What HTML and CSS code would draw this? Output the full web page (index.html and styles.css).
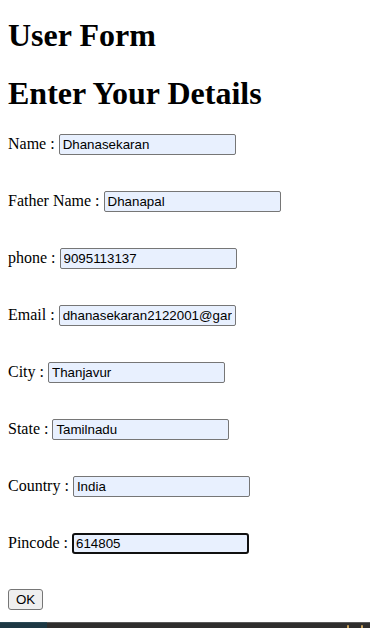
FILE: index.html
```html
<!DOCTYPE html>
<html lang="en">
<head>
<meta charset="utf-8">
<title>User Form</title>
<link rel="stylesheet" href="styles.css">
</head>
<body>
<h1 class="title">User Form</h1>
<h1 class="subtitle">Enter Your Details</h1>
<form class="form">
  <label class="row"><span class="label">Name :</span><input class="field" type="text" value="Dhanasekaran"></label>
  <label class="row"><span class="label">Father Name :</span><input class="field" type="text" value="Dhanapal"></label>
  <label class="row"><span class="label">phone :</span><input class="field" type="text" value="9095113137"></label>
  <label class="row"><span class="label">Email :</span><input class="field" type="text" value="dhanasekaran2122001@gar"></label>
  <label class="row"><span class="label">City :</span><input class="field" type="text" value="Thanjavur"></label>
  <label class="row"><span class="label">State :</span><input class="field" type="text" value="Tamilnadu"></label>
  <label class="row"><span class="label">Country :</span><input class="field" type="text" value="India"></label>
  <label class="row"><span class="label">Pincode :</span><input class="field is-focused" type="text" value="614805"></label>
  <div class="actions"><button class="btn" type="button">OK</button></div>
</form>
<div class="taskbar">
  <div class="taskbar-start"></div>
  <div class="taskbar-main">
    <span class="tray-dot tray-dot-a"></span>
    <span class="tray-dot tray-dot-b"></span>
  </div>
</div>
</body>
</html>
```

FILE: styles.css
```css
html, body {
  background: #ffffff;
}

body {
  margin: 0;
  padding: 0 8px;
  font-family: "Liberation Serif", "Times New Roman", serif;
  font-size: 16px;
  color: #000000;
}

.title,
.subtitle {
  font-size: 32px;
  font-weight: bold;
  line-height: normal;
  margin: 0;
}

.title {
  margin-top: 16.8px;
  margin-bottom: 21.44px;
}

.subtitle {
  margin-bottom: 21.44px;
}

.form {
  display: flex;
  flex-direction: column;
  align-items: flex-start;
  gap: 36px;
  margin: 0;
}

.row {
  display: flex;
  align-items: baseline;
  gap: 4px;
  height: 21px;
}

.label {
  white-space: nowrap;
}

.field {
  box-sizing: border-box;
  width: 177px;
  height: 21px;
  margin: 0;
  padding: 1px 3px;
  border: 1px solid #767676;
  border-radius: 2px;
  background: #e8f0fe;
  color: #000000;
  font-family: "Liberation Sans", Arial, sans-serif;
  font-size: 13.33px;
  outline: none;
}

.field.is-focused {
  border: 2px solid #101010;
  border-radius: 3px;
  padding: 0 2px;
}

.actions {
  margin-top: -1px;
}

.btn {
  box-sizing: border-box;
  height: 21px;
  margin: 0;
  padding: 1px 7px;
  border: 1px solid #767676;
  border-radius: 3px;
  background: #efefef;
  color: #000000;
  font-family: "Liberation Sans", Arial, sans-serif;
  font-size: 13.33px;
}

.taskbar {
  position: fixed;
  left: 0;
  right: 0;
  bottom: 0;
  height: 6px;
  display: flex;
}

.taskbar-start {
  width: 47px;
  background: #1d3843;
  border-top: 1px solid #2b4a56;
}

.taskbar-main {
  position: relative;
  flex: 1;
  background: #2f2e2d;
  border-top: 1px solid #5a5a5a;
}

.tray-dot {
  position: absolute;
  top: 2px;
  width: 2px;
  height: 4px;
  background: #c9a35e;
  border-radius: 1px 1px 0 0;
}

.tray-dot-a {
  left: 300px;
}

.tray-dot-b {
  left: 314px;
}
```
